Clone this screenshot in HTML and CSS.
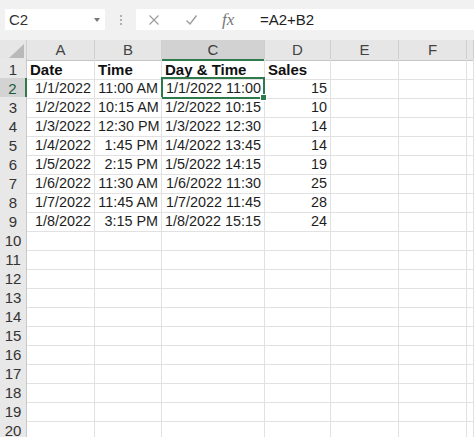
FILE: index.html
```html
<!DOCTYPE html>
<html>
<head>
<meta charset="utf-8">
<link rel="stylesheet" href="styles.css">
</head>
<body>
<div class="toolbar">
  <div class="namebox"><span>C2</span><span class="caret"></span></div>
  <div class="sep"><i></i><i></i><i></i></div>
  <div class="formula">
    <svg class="ico" width="12" height="12" viewBox="0 0 12 12"><path d="M1.5 1.5 L10.5 10.5 M10.5 1.5 L1.5 10.5" stroke="#9a9a9a" stroke-width="1.1" fill="none"/></svg>
    <svg class="ico ok" width="13" height="12" viewBox="0 0 13 12"><path d="M1.5 6.5 L5 10 L11.5 1.5" stroke="#9a9a9a" stroke-width="1.3" fill="none"/></svg>
    <span class="fx">fx</span>
    <span class="ftext">=A2+B2</span>
  </div>
</div>
<div class="sheet">
  <div class="r hdr"><div class="corner"></div><div>A</div><div>B</div><div class="sel">C</div><div>D</div><div>E</div><div>F</div><div></div></div>
  <div class="r"><div class="rn">1</div><div class="b">Date</div><div class="b">Time</div><div class="b">Day &amp; Time</div><div class="b">Sales</div><div></div><div></div><div></div></div>
  <div class="r"><div class="rn on">2</div><div class="n">1/1/2022</div><div class="n">11:00 AM</div><div class="n cur">1/1/2022 11:00</div><div class="n">15</div><div></div><div></div><div></div></div>
  <div class="r"><div class="rn">3</div><div class="n">1/2/2022</div><div class="n">10:15 AM</div><div class="n">1/2/2022 10:15</div><div class="n">10</div><div></div><div></div><div></div></div>
  <div class="r"><div class="rn">4</div><div class="n">1/3/2022</div><div class="n">12:30 PM</div><div class="n">1/3/2022 12:30</div><div class="n">14</div><div></div><div></div><div></div></div>
  <div class="r"><div class="rn">5</div><div class="n">1/4/2022</div><div class="n">1:45 PM</div><div class="n">1/4/2022 13:45</div><div class="n">14</div><div></div><div></div><div></div></div>
  <div class="r"><div class="rn">6</div><div class="n">1/5/2022</div><div class="n">2:15 PM</div><div class="n">1/5/2022 14:15</div><div class="n">19</div><div></div><div></div><div></div></div>
  <div class="r"><div class="rn">7</div><div class="n">1/6/2022</div><div class="n">11:30 AM</div><div class="n">1/6/2022 11:30</div><div class="n">25</div><div></div><div></div><div></div></div>
  <div class="r"><div class="rn">8</div><div class="n">1/7/2022</div><div class="n">11:45 AM</div><div class="n">1/7/2022 11:45</div><div class="n">28</div><div></div><div></div><div></div></div>
  <div class="r"><div class="rn">9</div><div class="n">1/8/2022</div><div class="n">3:15 PM</div><div class="n">1/8/2022 15:15</div><div class="n">24</div><div></div><div></div><div></div></div>
  <div class="r"><div class="rn">10</div><div></div><div></div><div></div><div></div><div></div><div></div><div></div></div>
  <div class="r"><div class="rn">11</div><div></div><div></div><div></div><div></div><div></div><div></div><div></div></div>
  <div class="r"><div class="rn">12</div><div></div><div></div><div></div><div></div><div></div><div></div><div></div></div>
  <div class="r"><div class="rn">13</div><div></div><div></div><div></div><div></div><div></div><div></div><div></div></div>
  <div class="r"><div class="rn">14</div><div></div><div></div><div></div><div></div><div></div><div></div><div></div></div>
  <div class="r"><div class="rn">15</div><div></div><div></div><div></div><div></div><div></div><div></div><div></div></div>
  <div class="r"><div class="rn">16</div><div></div><div></div><div></div><div></div><div></div><div></div><div></div></div>
  <div class="r"><div class="rn">17</div><div></div><div></div><div></div><div></div><div></div><div></div><div></div></div>
  <div class="r"><div class="rn">18</div><div></div><div></div><div></div><div></div><div></div><div></div><div></div></div>
  <div class="r"><div class="rn">19</div><div></div><div></div><div></div><div></div><div></div><div></div><div></div></div>
  <div class="r"><div class="rn">20</div><div></div><div></div><div></div><div></div><div></div><div></div><div></div></div>
</div>
</body>
</html>
```
FILE: styles.css
```css
* { box-sizing: border-box; }
html, body { margin: 0; padding: 0; background: #fff; }
body {
  width: 474px;
  height: 437px;
  overflow: hidden;
  font-family: "Liberation Sans", Arial, sans-serif;
  color: #1e1e1e;
}
.toolbar {
  height: 40px;
  background: #f1f1f1;
  display: flex;
  align-items: flex-start;
  padding-top: 9px;
  padding-left: 5px;
}
.namebox {
  width: 100px;
  height: 21px;
  background: #fff;
  display: flex;
  align-items: center;
  justify-content: space-between;
  padding: 0 5px 0 4px;
  font-size: 15px;
  color: #333;
}
.caret {
  width: 0; height: 0;
  border-left: 3.5px solid transparent;
  border-right: 3.5px solid transparent;
  border-top: 4px solid #777;
  margin-top: 1px;
}
.sep {
  width: 31px;
  height: 21px;
  display: flex;
  flex-direction: column;
  align-items: center;
  justify-content: center;
  gap: 2px;
}
.sep i {
  display: block;
  width: 2px; height: 2px;
  background: #b0b0b0;
}
.formula {
  flex: 1;
  height: 21px;
  background: #fff;
  display: flex;
  align-items: center;
  padding-left: 12px;
}
.ico { display: block; }
.ok { margin-left: 25px; }
.fx {
  margin-left: 24px;
  font-family: "Liberation Serif", "Times New Roman", serif;
  font-style: italic;
  font-size: 17px;
  color: #777;
  width: 14px;
}
.ftext {
  margin-left: 24px;
  font-size: 15px;
  color: #222;
}
.sheet { display: flex; flex-direction: column; }
.r {
  display: grid;
  grid-template-columns: 27px 68px 67px 103px 66px 68px 68px 1fr;
  height: 19px;
}
.r > div {
  border-right: 1px solid #e1e1e1;
  border-bottom: 1px solid #e1e1e1;
  font-size: 14.4px;
  line-height: 19px;
  padding: 1px 3px 0 3px;
  white-space: nowrap;
  overflow: visible;
  position: relative;
}
.r > div.rn {
  background: #e8e8e8;
  border-right: 1px solid #c9c9c9;
  border-bottom: 1px solid #d4d4d4;
  text-align: center;
  padding: 1px 0 0 0;
  font-size: 15px;
  color: #333;
}
.r > div.rn.on {
  background: #d3d3d3;
  border-right: 2px solid #2e7a4c;
  color: #1d5a35;
}
.hdr > div {
  background: #e6e6e6;
  border-right: 1px solid #cfcfcf;
  border-bottom: 1px solid #c4c4c4;
  text-align: center;
  padding: 0;
  font-size: 15px;
  color: #444;
}
.hdr > div.sel {
  background: #d2d2d2;
  border-bottom: 2px solid #2e7a4c;
  color: #3a3a3a;
}
.corner { background: #e6e6e6; }
.corner::after {
  content: "";
  position: absolute;
  right: 2px;
  bottom: 2px;
  width: 0; height: 0;
  border-left: 15px solid transparent;
  border-bottom: 14px solid #b9b9b9;
}
.b { font-weight: bold; color: #111; font-size: 15px; }
.r > div.b { font-size: 15px; }
.n { text-align: right; }
.cur::after {
  content: "";
  position: absolute;
  left: -1px; top: -1px;
  right: -1px; bottom: -1px;
  border: 2px solid #2e7a4c;
}
.cur::before {
  content: "";
  position: absolute;
  right: -3px; bottom: -3px;
  width: 5px; height: 5px;
  background: #2e7a4c;
  border: 1px solid #fff;
  z-index: 2;
}
```
